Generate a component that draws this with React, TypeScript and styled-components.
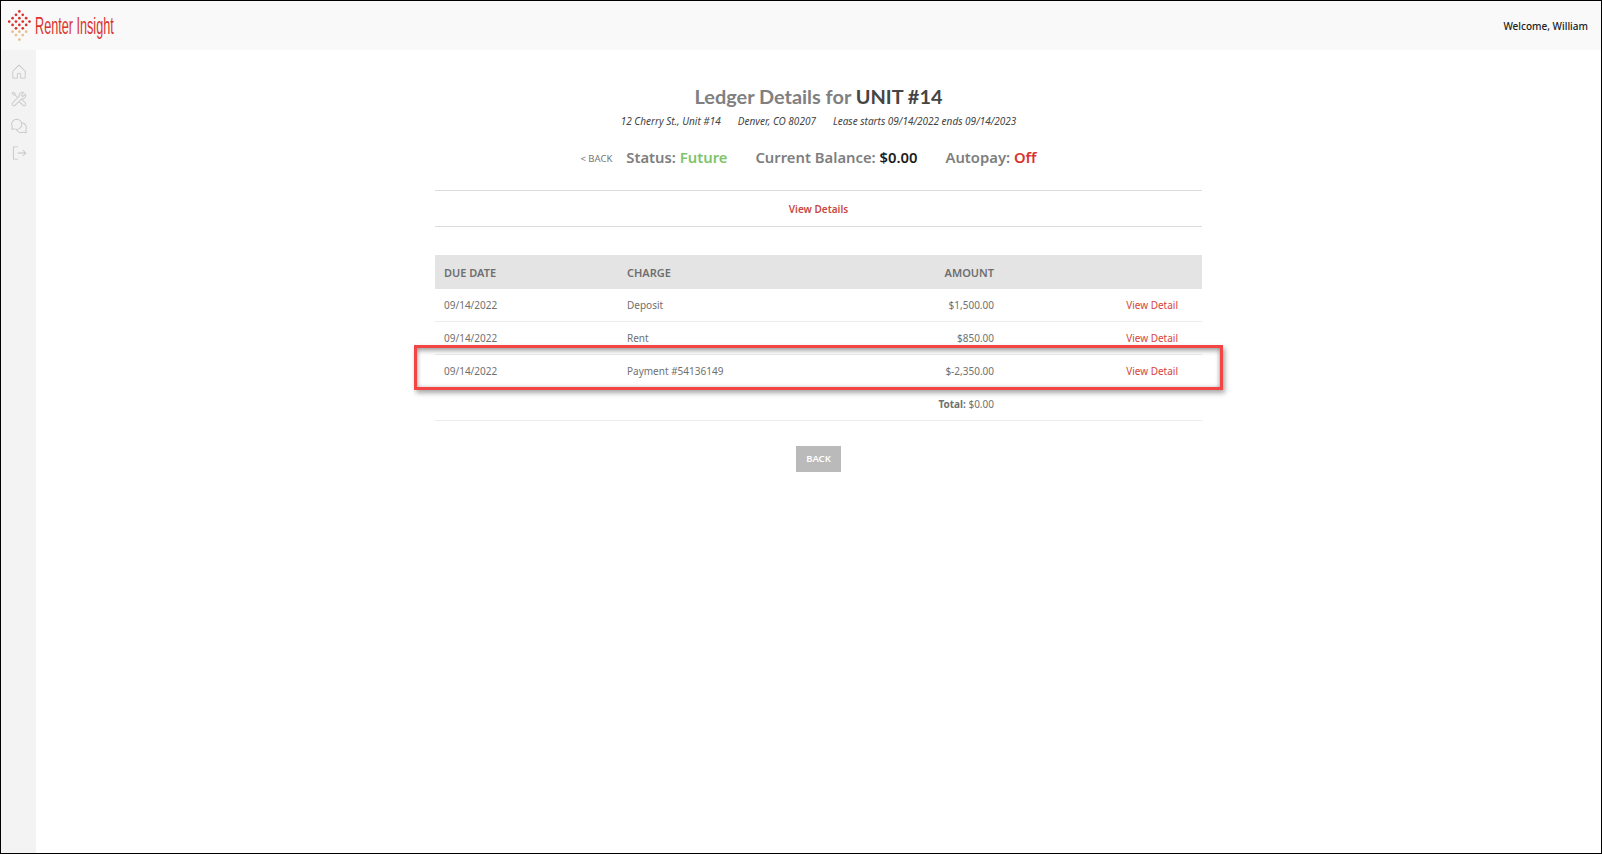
import React from 'react';
import styled, { createGlobalStyle } from 'styled-components';
import { PiHouseLight, PiChatsCircleLight, PiSignOutLight } from 'react-icons/pi';
import { LiaToolsSolid } from 'react-icons/lia';

interface LedgerRow {
  date: string;
  charge: string;
  amount: string;
  highlight?: boolean;
}

const rows: LedgerRow[] = [
  { date: '09/14/2022', charge: 'Deposit', amount: '$1,500.00' },
  { date: '09/14/2022', charge: 'Rent', amount: '$850.00' },
  { date: '09/14/2022', charge: 'Payment #54136149', amount: '$-2,350.00', highlight: true },
];

const redDots = [
  [19, 11], [16, 14], [22, 14], [13, 17], [19, 17], [25, 17],
  [10, 20], [16, 20], [22, 20], [28, 20], [13, 23], [19, 23], [25, 23], [16, 26], [22, 26],
];
const tanDots = [[13, 29], [19, 29], [25, 29], [16, 32], [22, 32], [19, 36]];

const GlobalStyle = createGlobalStyle`
  html, body {
    margin: 0;
    padding: 0;
    background: #ffffff;
  }
  * {
    box-sizing: border-box;
  }
`;

const Page = styled.div`
  width: 1602px;
  height: 854px;
  border: 1px solid #000000;
  display: flex;
  flex-direction: column;
  overflow: hidden;
  font-family: 'Noto Sans', sans-serif;
  color: #666666;
`;

const Header = styled.header`
  height: 49px;
  flex: none;
  background: #f9f9f9;
  display: flex;
  align-items: center;
  justify-content: space-between;
  padding: 0 13px 0 7px;
`;

const Logo = styled.div`
  display: flex;
  align-items: center;
`;

const LogoText = styled.span`
  display: inline-block;
  width: 80px;
  margin-left: 2px;
  font-family: 'Liberation Sans', sans-serif;
  font-size: 24px;
  color: #d9332b;
  white-space: nowrap;
  transform: scaleX(0.527);
  transform-origin: left center;
`;

const Welcome = styled.div`
  font-size: 10px;
  font-weight: 500;
  color: #222222;
`;

const Body = styled.div`
  flex: 1;
  display: flex;
  min-height: 0;
`;

const Sidebar = styled.nav`
  width: 35px;
  flex: none;
  background: #f3f3f3;
  display: flex;
  flex-direction: column;
  align-items: center;
  padding-top: 13px;
  gap: 9px;
  color: #c4c4c4;
  font-size: 18px;

  svg {
    display: block;
    width: 18px;
    height: 18px;
  }
`;

const ToolsIcon = styled(LiaToolsSolid)`
  color: #d0d0d0;
`;

const Main = styled.main`
  flex: 1;
  display: flex;
  flex-direction: column;
  align-items: center;
  padding-top: 32px;
`;

const Title = styled.h1`
  margin: 0;
  font-family: Lato, sans-serif;
  font-size: 19.9px;
  line-height: 28px;
  font-weight: 700;
  color: #808080;

  strong {
    font-weight: 700;
    color: #454545;
  }
`;

const Address = styled.div`
  display: flex;
  gap: 17px;
  margin-top: 4px;
  font-size: 10px;
  line-height: 14px;
  font-style: italic;
  color: #444444;
`;

const StatusRow = styled.div`
  display: flex;
  align-items: center;
  margin: 14px 20px 0 0;
  height: 30px;
`;

const BackLink = styled.a`
  font-size: 9.5px;
  color: #777777;
  margin: 3px 14px 0 0;
`;

const Stat = styled.div`
  font-size: 14.8px;
  font-weight: 600;
  color: #7e7e7e;
  margin-right: 28px;

  &:last-child {
    margin-right: 0;
  }
`;

const StatValue = styled.span<{ $tone: 'green' | 'red' | 'black' }>`
  color: ${p => (p.$tone === 'green' ? '#7fc36a' : p.$tone === 'red' ? '#d9332b' : '#1c1c1c')};
`;

const Content = styled.div`
  width: 767px;
`;

const DetailsBar = styled.div`
  margin-top: 18px;
  height: 37px;
  border-top: 1px solid #dddddd;
  border-bottom: 1px solid #dddddd;
  display: flex;
  align-items: center;
  justify-content: center;
  font-size: 10px;
  font-weight: 600;
  color: #c8493f;
`;

const Table = styled.div`
  margin-top: 28px;
`;

const Row = styled.div<{ $highlight?: boolean }>`
  position: relative;
  height: 33px;
  display: grid;
  grid-template-columns: 183px 240px 127px 1fr;
  align-items: center;
  padding: 0 24px 0 9px;
  border-bottom: 1px solid #ececec;
  font-size: 10px;
  color: #707070;

  ${p =>
    p.$highlight &&
    `
    &::after {
      content: '';
      position: absolute;
      left: -21px;
      right: -21px;
      top: -10px;
      bottom: -3px;
      border: 3px solid #f44545;
      box-shadow: 2px 3px 5px rgba(0, 0, 0, 0.35), inset 0 3px 5px rgba(0, 0, 0, 0.3), inset 0 0 4px rgba(0, 0, 0, 0.2);
      pointer-events: none;
    }
  `}
`;

const HeadRow = styled(Row)`
  height: 34px;
  background: #e4e4e4;
  border-bottom: none;
  font-size: 11px;
  font-weight: 600;
  color: #6f6f6f;
`;

const Amount = styled.div`
  text-align: right;
`;

const ViewLink = styled.a`
  text-align: right;
  color: #d4453c;
`;

const Total = styled(Amount)`
  grid-column: 3;

  strong {
    font-weight: 700;
  }
`;

const Actions = styled.div`
  display: flex;
  justify-content: center;
  margin-top: 25px;
`;

const BackButton = styled.button`
  width: 45px;
  height: 26px;
  border: none;
  padding: 0 0 2px;
  background: #bababa;
  color: #ffffff;
  font-family: inherit;
  font-size: 9.5px;
  font-weight: 600;
`;

const App: React.FC = () => (
  <Page>
    <GlobalStyle />
    <Header>
      <Logo>
        <svg width="25" height="35" viewBox="9 8 22 31">
          {redDots.map(([x, y]) => (
            <circle key={`${x}-${y}`} cx={x} cy={y} r="1.2" fill="#d9332b" />
          ))}
          {tanDots.map(([x, y]) => (
            <circle key={`${x}-${y}`} cx={x} cy={y} r="1.2" fill="#e8be8c" />
          ))}
        </svg>
        <LogoText>Renter Insight</LogoText>
      </Logo>
      <Welcome>Welcome, William</Welcome>
    </Header>
    <Body>
      <Sidebar>
        <PiHouseLight />
        <ToolsIcon />
        <PiChatsCircleLight />
        <PiSignOutLight />
      </Sidebar>
      <Main>
        <Title>
          Ledger Details for <strong>UNIT #14</strong>
        </Title>
        <Address>
          <span>12 Cherry St., Unit #14</span>
          <span>Denver, CO 80207</span>
          <span>Lease starts 09/14/2022 ends 09/14/2023</span>
        </Address>
        <StatusRow>
          <BackLink>&lt; BACK</BackLink>
          <Stat>
            Status: <StatValue $tone="green">Future</StatValue>
          </Stat>
          <Stat>
            Current Balance: <StatValue $tone="black">$0.00</StatValue>
          </Stat>
          <Stat>
            Autopay: <StatValue $tone="red">Off</StatValue>
          </Stat>
        </StatusRow>
        <Content>
          <DetailsBar>View Details</DetailsBar>
          <Table>
            <HeadRow>
              <div>DUE DATE</div>
              <div>CHARGE</div>
              <Amount>AMOUNT</Amount>
            </HeadRow>
            {rows.map(row => (
              <Row key={row.charge} $highlight={row.highlight}>
                <div>{row.date}</div>
                <div>{row.charge}</div>
                <Amount>{row.amount}</Amount>
                <ViewLink>View Detail</ViewLink>
              </Row>
            ))}
            <Row>
              <Total>
                <strong>Total:</strong> $0.00
              </Total>
            </Row>
          </Table>
          <Actions>
            <BackButton>BACK</BackButton>
          </Actions>
        </Content>
      </Main>
    </Body>
  </Page>
);

export default App;
